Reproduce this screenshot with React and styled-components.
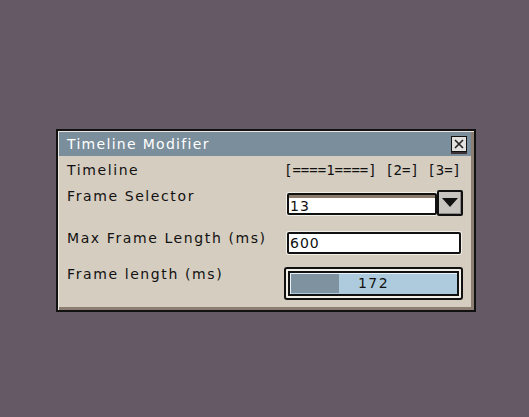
import React from "react";
import styled, { createGlobalStyle } from "styled-components";

const Global = createGlobalStyle`
  html, body {
    margin: 0;
    background: #665966;
  }
  body {
    width: 529px;
    height: 417px;
    padding: 129px 0 0 56px;
    box-sizing: border-box;
    font-family: "DejaVu Sans", "Liberation Sans", sans-serif;
    -webkit-font-smoothing: none;
  }
`;

const Window = styled.div`
  width: 420px;
  box-sizing: border-box;
  border: 2px solid #111;
  background: #d5cdc0;
  box-shadow: inset 1px 1px 0 #ece8e0, inset -3px -3px 0 #8c7e72;
  padding: 1px 3px 3px 1px;
`;

const TitleBar = styled.div`
  height: 24px;
  background: #7a8e9c;
  display: flex;
  align-items: center;
  justify-content: space-between;
  padding: 0 4px 0 8px;
  color: #fff;
  font-size: 14px;
  letter-spacing: 1.3px;
`;

const CloseButton = styled.div`
  width: 14px;
  height: 14px;
  border: 1px solid #111;
  background: #e4e2de;
  box-shadow: 0 2px 0 #3a3036;
  display: flex;
  align-items: center;
  justify-content: center;
`;

const Body = styled.div`
  display: grid;
  grid-template-columns: 1fr 179px;
  grid-template-rows: 28px 36px 38px 44px;
  padding: 0 8px 5px 8px;
`;

const Label = styled.div`
  font-size: 14px;
  letter-spacing: 1.6px;
  color: #111;
  white-space: nowrap;
  padding-top: ${p => p.$top}px;
`;

const Cell = styled.div`
  display: flex;
  align-items: flex-start;
  justify-content: ${p => p.$justify || "flex-start"};
  padding-top: ${p => p.$top || 0}px;
`;

const Tracks = styled.div`
  font-family: "DejaVu Sans Mono", "Liberation Mono", monospace;
  font-size: 14px;
  white-space: nowrap;
  color: #111;
  padding-right: 2px;
`;

const SelectWrap = styled.div`
  display: flex;
  align-items: flex-start;
  margin-left: 3px;
`;

const TextBox = styled.div`
  width: ${p => p.$w}px;
  height: 22px;
  margin-top: ${p => p.$mt || 0}px;
  box-sizing: border-box;
  border: 2px solid #111;
  border-radius: 2px;
  background: #fff;
  box-shadow: ${p => (p.$inset ? "inset 0 3px 0 #8a7a6c, 0 0 0 1px #f2eee8" : "0 0 0 1px #f2eee8")};
  padding: ${p => (p.$inset ? "3px" : "1px")} 1px 0;
  font-size: 14px;
  letter-spacing: 1px;
  color: #111;
  line-height: 16px;
`;

const DropButton = styled.div`
  width: 26px;
  height: 26px;
  box-sizing: border-box;
  border: 2px solid #111;
  border-radius: 2px;
  background: #c8c4c0;
  box-shadow: inset -1px -1px 0 #8e8a86;
  display: flex;
  align-items: center;
  justify-content: center;
`;

const Progress = styled.div`
  width: 179px;
  height: 33px;
  box-sizing: border-box;
  border: 2px solid #111;
  border-radius: 3px;
  background: #f3f0ea;
  padding: 2px;
`;

const Track = styled.div`
  position: relative;
  height: 100%;
  box-sizing: border-box;
  border: 2px solid #111;
  background: #aecbde;
  box-shadow: inset 1px 1px 0 #e8f2f8;
  overflow: hidden;
`;

const Fill = styled.div`
  position: absolute;
  left: 1px;
  top: 1px;
  bottom: 1px;
  background: #7f929f;
`;

const ProgressText = styled.div`
  position: relative;
  text-align: center;
  font-size: 14px;
  line-height: 21px;
  color: #111;
  letter-spacing: 1.5px;
`;

export default function App() {
  const value = 172;
  const max = 600;
  return (
    <>
      <Global />
      <Window>
        <TitleBar>
          <span>Timeline Modifier</span>
          <CloseButton>
            <svg width="10" height="10" viewBox="0 0 10 10">
              <path d="M1 1 L9 9 M9 1 L1 9" stroke="#222" strokeWidth="1.6" />
            </svg>
          </CloseButton>
        </TitleBar>
        <Body>
          <Label $top={6}>Timeline</Label>
          <Cell $justify="flex-end" $top={6}>
            <Tracks>[====1====] [2=] [3=]</Tracks>
          </Cell>

          <Label $top={4}>Frame Selector</Label>
          <Cell $top={6}>
            <SelectWrap>
              <TextBox $w={150} $mt={3} $inset>13</TextBox>
              <DropButton>
                <svg width="16" height="10" viewBox="0 0 16 10">
                  <path d="M0 0 H16 L8 9 Z" fill="#111" />
                </svg>
              </DropButton>
            </SelectWrap>
          </Cell>

          <Label $top={10}>Max Frame Length (ms)</Label>
          <Cell $top={12}>
            <SelectWrap>
              <TextBox $w={174}>600</TextBox>
            </SelectWrap>
          </Cell>

          <Label $top={8}>Frame length (ms)</Label>
          <Cell $top={9}>
            <Progress>
              <Track>
                <Fill style={{ width: `${(value / max) * 100}%` }} />
                <ProgressText>{value}</ProgressText>
              </Track>
            </Progress>
          </Cell>
        </Body>
      </Window>
    </>
  );
}
